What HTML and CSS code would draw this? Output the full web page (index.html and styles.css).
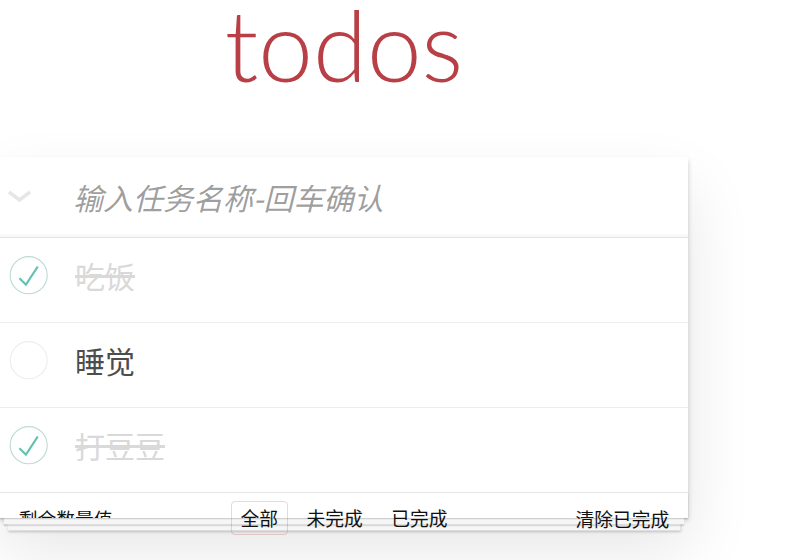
FILE: index.html
```html
<!DOCTYPE html>
<html lang="zh-CN">
<head>
<meta charset="utf-8">
<title>todos</title>
<link rel="stylesheet" href="styles.css">
</head>
<body>
<section class="todoapp">
  <h1 class="title">todos</h1>
  <div class="card">
    <header class="new-row">
      <svg class="toggle-all" width="30" height="16" viewBox="0 0 30 16" aria-hidden="true">
        <polyline points="4,4 14.5,12 25,4" fill="none" stroke="#e6e6e6" stroke-width="3.5"/>
      </svg>
      <input class="new-todo" type="text" placeholder="输入任务名称-回车确认">
    </header>
    <ul class="todo-list">
      <li class="todo completed">
        <svg class="toggle" width="50" height="50" viewBox="-10 -18 100 135" aria-hidden="true">
          <circle cx="50" cy="50" r="50" fill="none" stroke="#bddad5" stroke-width="3"/>
          <path fill="#5dc2af" d="M72 25L42 71 27 56l-4 4 20 20 34-52z"/>
        </svg>
        <span class="label">吃饭</span>
      </li>
      <li class="todo">
        <svg class="toggle" width="50" height="50" viewBox="-10 -18 100 135" aria-hidden="true">
          <circle cx="50" cy="50" r="50" fill="none" stroke="#ededed" stroke-width="3"/>
        </svg>
        <span class="label">睡觉</span>
      </li>
      <li class="todo completed">
        <svg class="toggle" width="50" height="50" viewBox="-10 -18 100 135" aria-hidden="true">
          <circle cx="50" cy="50" r="50" fill="none" stroke="#bddad5" stroke-width="3"/>
          <path fill="#5dc2af" d="M72 25L42 71 27 56l-4 4 20 20 34-52z"/>
        </svg>
        <span class="label">打豆豆</span>
      </li>
    </ul>
    <footer class="footer">
      <span class="count">剩余数量值</span>
      <ul class="filters">
        <li><a class="filter selected">全部</a></li>
        <li><a class="filter">未完成</a></li>
        <li><a class="filter">已完成</a></li>
      </ul>
      <div class="clear-wrap"><button class="clear">清除已完成</button></div>
    </footer>
  </div>
</section>
</body>
</html>
```

FILE: styles.css
```css
html, body {
  margin: 0;
  padding: 0;
}

body {
  background: #ffffff;
  color: #111111;
  font-family: "Noto Sans CJK SC", "Noto Sans", sans-serif;
  min-height: 560px;
}

.todoapp {
  width: 688px;
  padding-bottom: 42px;
}

.title {
  margin: 0;
  height: 157px;
  text-align: center;
  font-family: Lato, "Open Sans", sans-serif;
  font-weight: 300;
  font-size: 98px;
  line-height: 88px;
  color: #b83f45;
}

.card {
  position: relative;
  background: #ffffff;
  box-shadow: 0 2.5px 5px rgba(0, 0, 0, 0.2), 0 31px 62px rgba(0, 0, 0, 0.1);
}

.new-row {
  height: 80px;
  display: flex;
  align-items: center;
  box-shadow: inset 0 -2.5px 1.25px rgba(0, 0, 0, 0.03);
}

.toggle-all {
  flex: none;
  margin-left: 5px;
  margin-top: -2px;
}

.new-todo {
  flex: 1;
  margin-left: 38px;
  border: 0;
  outline: none;
  background: transparent;
  padding: 0;
  font-family: "Noto Sans CJK SC", sans-serif;
  font-size: 30px;
  line-height: 42px;
  height: 42px;
  color: #4d4d4d;
}

.new-todo::placeholder {
  font-style: italic;
  color: rgba(0, 0, 0, 0.4);
}

.todo-list {
  margin: 0;
  padding: 0;
  list-style: none;
  border-top: 1px solid #e6e6e6;
}

.todo {
  display: flex;
  align-items: flex-start;
  height: 84px;
  border-bottom: 1px solid #ededed;
}

.todo:last-child {
  border-bottom: 0;
}

.toggle {
  flex: none;
  margin-top: 12px;
}

.label {
  margin-left: 25px;
  padding-top: 19px;
  font-size: 30px;
  line-height: 36px;
  color: #4d4d4d;
}

.completed .label {
  color: #d9d9d9;
  text-decoration: line-through;
}

.footer {
  position: relative;
  display: flex;
  align-items: flex-start;
  height: 25px;
  padding: 0 18.75px;
  border-top: 1px solid #e6e6e6;
  font-size: 18.75px;
  color: #111111;
}

.footer::before {
  content: "";
  position: absolute;
  left: 0;
  right: 0;
  bottom: 0;
  height: 25px;
  box-shadow:
    0 1.25px 1.25px rgba(0, 0, 0, 0.2),
    0 10px 0 -3.75px #f6f6f6,
    0 11.25px 1.25px -3.75px rgba(0, 0, 0, 0.2),
    0 20px 0 -7.5px #f6f6f6,
    0 21.25px 2.5px -7.5px rgba(0, 0, 0, 0.2);
}

.count {
  flex: 1 1 0;
  margin-top: 12.5px;
  line-height: 25px;
  white-space: nowrap;
}

.filters {
  position: relative;
  z-index: 1;
  display: flex;
  gap: 9.5px;
  margin: 8px 0 0;
  padding: 0;
  list-style: none;
}

.filter {
  display: block;
  padding: 4px 8.5px;
  line-height: 24px;
  border: 1px solid transparent;
  border-radius: 4px;
  color: #111111;
  white-space: nowrap;
}

.filter.selected {
  border-color: rgba(175, 47, 47, 0.2);
}

.clear-wrap {
  flex: 1 1 0;
  display: flex;
  justify-content: flex-end;
}

.clear {
  position: relative;
  z-index: 1;
  margin: 12.5px 0 0;
  padding: 0;
  border: 0;
  background: none;
  font: inherit;
  line-height: 25px;
  color: #111111;
  white-space: nowrap;
}
```
